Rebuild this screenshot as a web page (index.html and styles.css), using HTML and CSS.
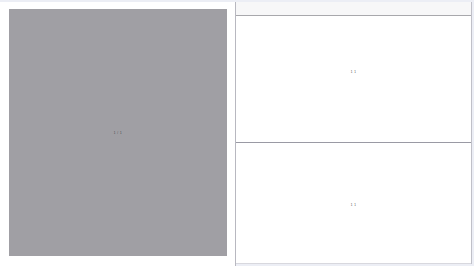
FILE: index.html
```html
<!DOCTYPE html>
<html>
<head>
<meta charset="utf-8">
<link rel="stylesheet" href="styles.css">
</head>
<body>
<div class="app">
  <div class="left">
    <div class="canvas"><span class="label">1 / 1</span></div>
  </div>
  <div class="right">
    <div class="toolbar"></div>
    <div class="pane pane-top"><span class="label">1 1</span></div>
    <div class="pane pane-bottom"><span class="label">1 1</span></div>
  </div>
</div>
</body>
</html>
```
FILE: styles.css
```css
html, body {
  margin: 0;
  padding: 0;
  background: #f1f1f4;
  font-family: "Liberation Sans", Arial, sans-serif;
}
.app {
  display: flex;
  width: 474px;
  height: 266px;
  box-sizing: border-box;
  padding-top: 2px;
  background: #eceef5;
}
.left {
  width: 236px;
  box-sizing: border-box;
  padding: 7px 8px 10px 9px;
  background: #ffffff;
  border-right: 1px solid #b8b8c0;
  display: flex;
}
.canvas {
  flex: 1;
  background: #a09fa4;
  display: flex;
  align-items: center;
  justify-content: center;
}
.right {
  flex: 1;
  display: flex;
  flex-direction: column;
  margin-right: 2px;
  border-right: 1px solid #c0c0c8;
  margin-bottom: 2px;
}
.toolbar {
  height: 13px;
  background: #f7f7f8;
  border-bottom: 1px solid #a8a8ac;
}
.pane {
  background: #ffffff;
  display: flex;
  align-items: center;
  justify-content: center;
}
.pane-top {
  height: 127px;
  box-sizing: border-box;
  padding-bottom: 14px;
  border-bottom: 1px solid #9a9aa4;
}
.pane-bottom {
  flex: 1;
  box-sizing: border-box;
  padding-top: 3px;
  border-bottom: 1px solid #d8d8de;
}
.label {
  font-size: 3px;
  color: #444;
  letter-spacing: 0.5px;
}
```
